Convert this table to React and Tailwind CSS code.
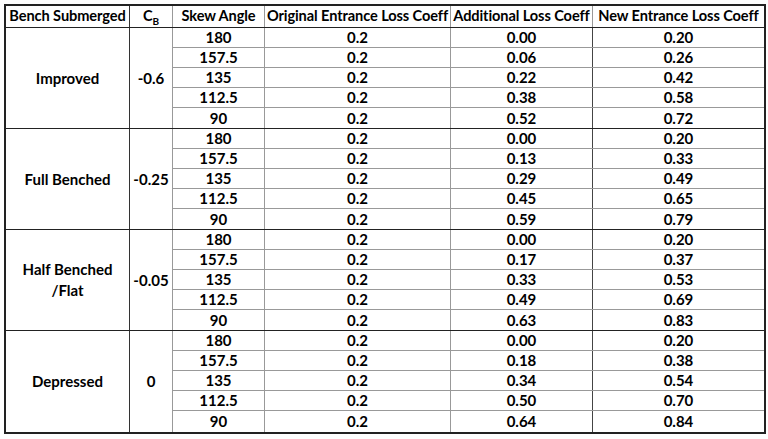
import React from "react";

const groups = [
  { name: ["Improved"], cb: "-0.6", add: ["0.00", "0.06", "0.22", "0.38", "0.52"], nw: ["0.20", "0.26", "0.42", "0.58", "0.72"] },
  { name: ["Full Benched"], cb: "-0.25", add: ["0.00", "0.13", "0.29", "0.45", "0.59"], nw: ["0.20", "0.33", "0.49", "0.65", "0.79"] },
  { name: ["Half Benched", "/Flat"], cb: "-0.05", add: ["0.00", "0.17", "0.33", "0.49", "0.63"], nw: ["0.20", "0.37", "0.53", "0.69", "0.83"] },
  { name: ["Depressed"], cb: "0", add: ["0.00", "0.18", "0.34", "0.50", "0.64"], nw: ["0.20", "0.38", "0.54", "0.70", "0.84"] },
];
const angles = ["180", "157.5", "135", "112.5", "90"];

export default function App() {
  return (
    <div className="w-[768px] h-[439px] bg-white pt-[4px] pl-[4px] text-[15px] font-bold text-black leading-none" style={{ fontFamily: "Lato, 'Liberation Sans', sans-serif" }}>
      <div className="w-[762px] border-2 border-[#222]">
        <div className="flex h-[22px] border-b border-[#222] text-[14.6px] tracking-[-0.1px]">
          <div className="w-[124px] border-r border-[#333] flex items-center justify-center whitespace-nowrap">Bench Submerged</div>
          <div className="w-[43px] border-r border-[#999] flex items-center justify-center">C<sub className="text-[10px] relative top-[4px]">B</sub></div>
          <div className="w-[92px] border-r border-[#999] flex items-center justify-center whitespace-nowrap">Skew Angle</div>
          <div className="w-[186px] border-r border-[#999] flex items-center justify-center whitespace-nowrap">Original Entrance Loss Coeff</div>
          <div className="w-[142px] border-r border-[#999] flex items-center justify-center whitespace-nowrap">Additional Loss Coeff</div>
          <div className="flex-1 flex items-center justify-center whitespace-nowrap">New Entrance Loss Coeff</div>
        </div>
        {groups.map((g, gi) => (
          <div key={gi} className={"flex h-[101px] " + (gi < 3 ? "border-b border-[#222]" : "")}>
            <div className="w-[124px] border-r border-[#333] flex flex-col items-center justify-center gap-[6px]">
              {g.name.map((n, i) => (
                <span key={i}>{n}</span>
              ))}
            </div>
            <div className="w-[43px] border-r border-[#999] flex items-center justify-center">{g.cb}</div>
            <div className="flex-1 flex flex-col">
              {angles.map((a, i) => (
                <div key={i} className={"flex " + (i < 4 ? "h-[20px] border-b border-[#999]" : "flex-1")}>
                  <div className="w-[92px] border-r border-[#999] flex items-center justify-center">{a}</div>
                  <div className="w-[186px] border-r border-[#999] flex items-center justify-center">0.2</div>
                  <div className="w-[142px] border-r border-[#444] flex items-center justify-center">{g.add[i]}</div>
                  <div className="flex-1 flex items-center justify-center">{g.nw[i]}</div>
                </div>
              ))}
            </div>
          </div>
        ))}
      </div>
    </div>
  );
}
